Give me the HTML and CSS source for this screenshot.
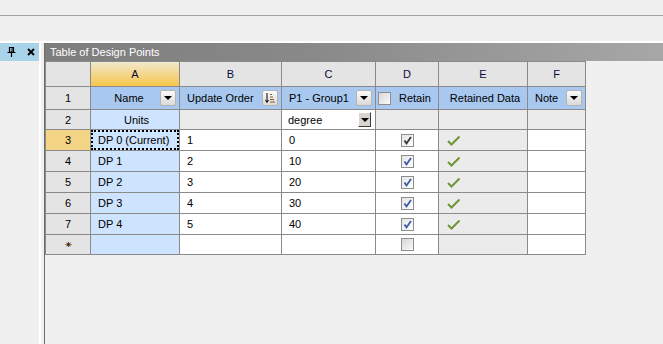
FILE: index.html
```html
<!DOCTYPE html>
<html lang="en">
  <head>
    <meta charset="UTF-8" />
    <title>Table of Design Points</title>
    <link rel="stylesheet" href="styles.css">
  </head>
  <body>
    <div class="top-strip"></div>
    <div class="toolbar"></div>

    <div class="workspace">
      <!-- collapsed side pane -->
      <div class="side">
        <div class="side-header">
          <svg class="pin" width="9" height="10" viewBox="0 0 9 10">
            <path d="M2.5 0.5 H6.5 V5 H2.5 Z M0.5 5.5 H8.5 M4.5 5.5 V10" fill="none" stroke="#000" stroke-width="1.2" />
            <path d="M5 1 V5" stroke="#000" stroke-width="1" />
          </svg>
          <svg class="close" width="8" height="8" viewBox="0 0 8 8">
            <path d="M1 1 L7 7 M7 1 L1 7" stroke="#000" stroke-width="1.8" />
          </svg>
        </div>
      </div>

      <div class="pane">
        <div class="pane-title">Table of Design Points</div>

        <div class="grid">
          <!-- column letters -->
          <div class="cell corner"></div>
          <div class="cell col-hd col-hd-active">A</div>
          <div class="cell col-hd">B</div>
          <div class="cell col-hd">C</div>
          <div class="cell col-hd">D</div>
          <div class="cell col-hd">E</div>
          <div class="cell col-hd">F</div>

          <!-- row 1: parameter names -->
          <div class="cell row-hd">1</div>
          <div class="cell name-hd"><span class="grow center">Name</span><span class="dd"><i></i></span></div>
          <div class="cell name-hd"><span class="grow">Update Order</span>
            <span class="dd">
              <svg width="10" height="12" viewBox="0 0 10 12">
                <path d="M2 1 V10 M0.5 8 L2 10.5 L3.5 8" fill="none" stroke="#000" stroke-width="1" />
                <path d="M5 2.5 H7 M5 5 H8 M5 7.5 H9 M5 10 H10" stroke="#8a5a2a" stroke-width="1" />
              </svg>
            </span>
          </div>
          <div class="cell name-hd"><span class="grow">P1 - Group1</span><span class="dd"><i></i></span></div>
          <div class="cell name-hd retain-hd"><span class="cb"></span><span class="grow retain">Retain</span></div>
          <div class="cell name-hd"><span class="grow center">Retained Data</span></div>
          <div class="cell name-hd"><span class="grow">Note</span><span class="dd"><i></i></span></div>

          <!-- row 2: units -->
          <div class="cell row-hd">2</div>
          <div class="cell a-cell center">Units</div>
          <div class="cell ro"></div>
          <div class="cell unit-edit"><span class="grow">degree</span><span class="dd-sunk"><i></i></span></div>
          <div class="cell ro"></div>
          <div class="cell ro"></div>
          <div class="cell ro"></div>

          <!-- design points -->
          <div class="cell row-hd row-hd-active">3</div>
          <div class="cell a-cell focus">DP 0 (Current)</div>
          <div class="cell">1</div>
          <div class="cell">0</div>
          <div class="cell mid"><span class="cb on"><svg width="11" height="11" viewBox="0 0 11 11"><path d="M2.5 5.5 L4.5 8.5 L9 2" fill="none" stroke="#333" stroke-width="1.8" /></svg></span></div>
          <div class="cell ro"><svg class="ok" width="14" height="11" viewBox="0 0 14 11"><path d="M1 6 L4.5 9.5 L12.5 1.5" fill="none" stroke="#6f9636" stroke-width="2" /></svg></div>
          <div class="cell"></div>

          <div class="cell row-hd">4</div>
          <div class="cell a-cell">DP 1</div>
          <div class="cell">2</div>
          <div class="cell">10</div>
          <div class="cell mid"><span class="cb on"><svg width="11" height="11" viewBox="0 0 11 11"><path d="M2.5 5.5 L4.5 8.5 L9 2" fill="none" stroke="#3b5aa8" stroke-width="1.8" /></svg></span></div>
          <div class="cell ro"><svg class="ok" width="14" height="11" viewBox="0 0 14 11"><path d="M1 6 L4.5 9.5 L12.5 1.5" fill="none" stroke="#6f9636" stroke-width="2" /></svg></div>
          <div class="cell"></div>

          <div class="cell row-hd">5</div>
          <div class="cell a-cell">DP 2</div>
          <div class="cell">3</div>
          <div class="cell">20</div>
          <div class="cell mid"><span class="cb on"><svg width="11" height="11" viewBox="0 0 11 11"><path d="M2.5 5.5 L4.5 8.5 L9 2" fill="none" stroke="#3b5aa8" stroke-width="1.8" /></svg></span></div>
          <div class="cell ro"><svg class="ok" width="14" height="11" viewBox="0 0 14 11"><path d="M1 6 L4.5 9.5 L12.5 1.5" fill="none" stroke="#6f9636" stroke-width="2" /></svg></div>
          <div class="cell"></div>

          <div class="cell row-hd">6</div>
          <div class="cell a-cell">DP 3</div>
          <div class="cell">4</div>
          <div class="cell">30</div>
          <div class="cell mid"><span class="cb on"><svg width="11" height="11" viewBox="0 0 11 11"><path d="M2.5 5.5 L4.5 8.5 L9 2" fill="none" stroke="#3b5aa8" stroke-width="1.8" /></svg></span></div>
          <div class="cell ro"><svg class="ok" width="14" height="11" viewBox="0 0 14 11"><path d="M1 6 L4.5 9.5 L12.5 1.5" fill="none" stroke="#6f9636" stroke-width="2" /></svg></div>
          <div class="cell"></div>

          <div class="cell row-hd">7</div>
          <div class="cell a-cell">DP 4</div>
          <div class="cell">5</div>
          <div class="cell">40</div>
          <div class="cell mid"><span class="cb on"><svg width="11" height="11" viewBox="0 0 11 11"><path d="M2.5 5.5 L4.5 8.5 L9 2" fill="none" stroke="#3b5aa8" stroke-width="1.8" /></svg></span></div>
          <div class="cell ro"><svg class="ok" width="14" height="11" viewBox="0 0 14 11"><path d="M1 6 L4.5 9.5 L12.5 1.5" fill="none" stroke="#6f9636" stroke-width="2" /></svg></div>
          <div class="cell"></div>

          <!-- new row -->
          <div class="cell row-hd">
            <svg width="7" height="5" viewBox="0 0 7 5">
              <path d="M0 2.5 H7" stroke="#d07a20" stroke-width="1" />
              <path d="M3.5 0 V5" stroke="#2a4c9c" stroke-width="1" />
              <path d="M1.5 1 L5.5 4 M5.5 1 L1.5 4" stroke="#222" stroke-width="1" />
            </svg>
          </div>
          <div class="cell a-cell"></div>
          <div class="cell"></div>
          <div class="cell"></div>
          <div class="cell mid"><span class="cb"></span></div>
          <div class="cell ro"></div>
          <div class="cell"></div>
        </div>
      </div>
    </div>
  </body>
</html>
```

FILE: styles.css
```css
body {
  margin: 0;
  overflow: hidden;
  height: 344px;
  display: flex;
  flex-direction: column;
  font-family: "Liberation Sans", Arial, sans-serif;
  font-size: 11px;
  color: #000;
  background-color: #f0f0f0;
}

.top-strip {
  height: 15px;
  border-bottom: 1px solid #a3a3a3;
}

.toolbar {
  height: 25px;
  border-bottom: 2px solid #fff;
}

.workspace {
  flex: 1;
  display: flex;
}

/* collapsed side pane */
.side {
  width: 39px;
  border-right: 2px solid #fff;
  margin-right: 3px;
}

.side-header {
  height: 18px;
  background: #a9d3e9;
  display: flex;
  align-items: center;
  gap: 11px;
  padding-left: 7px;
}

.pane {
  flex: 1;
  display: flex;
  flex-direction: column;
  align-items: flex-start;
  border-left: 1px solid #6c6c6c;
}

.pane-title {
  align-self: stretch;
  height: 18px;
  line-height: 18px;
  padding-left: 5px;
  color: #fff;
  font-size: 11px;
  background: linear-gradient(to right, #7d7d7d 0%, #8a8a8a 45%, #a7a7a7 100%);
}

/* spreadsheet */
.grid {
  display: grid;
  grid-template-columns: 44px 88px 101px 93px 62px 88px 57px;
  grid-template-rows: 24px 22px 19px 20px 20px 20px 20px 20px 19px;
  gap: 1px;
  padding: 1px;
  background: #8a8a8a;
}

.cell {
  display: flex;
  align-items: center;
  padding: 0 4px 0 7px;
  background: #fff;
  white-space: nowrap;
  overflow: hidden;
}

.corner,
.row-hd,
.col-hd {
  background: #e4e4e4;
  justify-content: center;
  padding: 0;
}

.col-hd {
  color: #0a0a3c;
}

.col-hd-active {
  background: linear-gradient(#f1e8cf, #f7c64a);
}

.row-hd-active {
  background: #f4d485;
}

.name-hd {
  background: #a8c8ef;
  padding-right: 3px;
}

.retain-hd {
  padding-left: 2px;
}

.a-cell {
  background: #cee4fe;
}

.ro {
  background: #ebebeb;
  padding-left: 8px;
}

.center {
  justify-content: center;
  text-align: center;
}

.mid {
  justify-content: center;
  padding: 0;
}

.grow {
  flex: 1;
}

.focus {
  outline: 2px dotted #000;
  outline-offset: -2px;
}

.unit-edit {
  padding-left: 6px;
  padding-right: 4px;
}

.retain {
  padding-left: 8px;
}

/* small dropdown buttons */
.dd {
  width: 14px;
  height: 14px;
  border: 1px solid #b4b4b4;
  border-radius: 2px;
  background: linear-gradient(#fbfbfb, #d9d9d9);
  display: flex;
  align-items: center;
  justify-content: center;
}

.dd i,
.dd-sunk i {
  width: 0;
  height: 0;
  border-left: 4px solid transparent;
  border-right: 4px solid transparent;
  border-top: 4px solid #000;
}

.dd-sunk {
  width: 11px;
  height: 13px;
  background: #d8d5cf;
  border-top: 1px solid #fff;
  border-left: 1px solid #fff;
  border-right: 1px solid #3c3c3c;
  border-bottom: 1px solid #3c3c3c;
  display: flex;
  align-items: center;
  justify-content: center;
}

/* checkboxes */
.cb {
  width: 13px;
  height: 13px;
  box-sizing: border-box;
  border: 1px solid #8e8e8e;
  background: linear-gradient(135deg, #d6d6d6, #fafafa);
  display: flex;
  align-items: center;
  justify-content: center;
}

.cb.on {
  background: linear-gradient(135deg, #e4e4e4, #ffffff);
}

.ok {
  display: block;
}
```
